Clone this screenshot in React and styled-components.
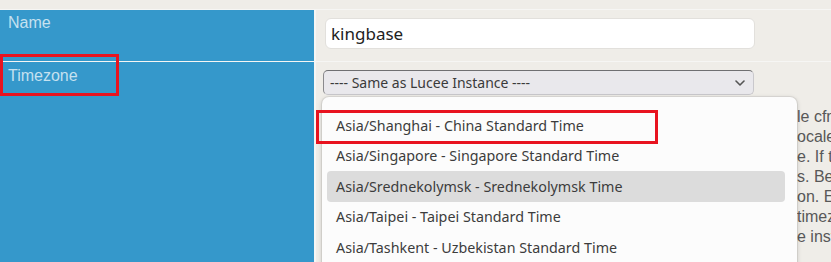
import React from 'react';
import styled, { createGlobalStyle } from 'styled-components';

const GlobalStyle = createGlobalStyle`
  html, body { margin: 0; padding: 0; overflow: hidden; }
  body {
    background: #efede8;
    font-family: "Liberation Sans", Arial, sans-serif;
    width: 831px; height: 262px;
  }
`;

const Page = styled.div`
  position: relative;
  width: 831px; height: 262px;
  overflow: hidden;
`;

// --- top strip (previous content, clipped) ---
const TopStrip = styled.div`
  height: 9px; overflow: hidden;
  padding-left: 146px;
`;

const Crumb = styled.span`
  display: block; margin-top: -16px;
  font-size: 14px; line-height: 16px; color: #3598cb;
`;

// --- form table ---
const Table = styled.div`
  display: grid;
  grid-template-columns: 314px 1fr;
  grid-template-rows: 51px 1fr;
  column-gap: 2px; row-gap: 1px;
  padding-top: 1px;
  background: #f6f6f4;
  height: 252px;
`;

const Label = styled.div`
  background: #3598cb;
  color: rgba(255, 255, 255, 0.72);
  font-size: 16px;
  padding: ${({ $top }) => $top}px 0 0 8px;
`;

const Value = styled.div`
  background: #efede8;
  padding: ${({ $pad }) => $pad};
`;

const TextInput = styled.div`
  width: 430px; height: 31px; box-sizing: border-box;
  background: #fff; border: 1px solid #e2e0dc; border-radius: 6px;
  display: flex; align-items: center; padding-left: 5px;
  font-family: "Noto Sans", sans-serif; font-size: 17px; color: #222;
`;

const SelectWrap = styled.div`
  position: relative; width: 431px;
`;

const Select = styled.div`
  height: 25px; box-sizing: border-box;
  background: #e9e8ec;
  border: 1px solid #c9c8cc; border-top-color: #6f6f72; border-left-color: #8a8a8d;
  border-radius: 5px;
  display: flex; align-items: center; justify-content: space-between;
  padding: 0 8px 0 6px;
  font-family: "Noto Sans", sans-serif; font-size: 14px; color: #3a3a3a;
  svg { color: #555; }
`;

const Popup = styled.div`
  position: absolute; top: 27px; left: -1px;
  width: 475px; height: 200px;
  background: #fcfcfc; border-radius: 7px;
  box-shadow: 0 0 0 1px rgba(0,0,0,0.06), 0 1px 5px rgba(0,0,0,0.18);
  padding: 13px 0 0 5px; box-sizing: border-box;
  z-index: 2;
`;

const Option = styled.div`
  width: 458px; height: 30.5px; box-sizing: border-box;
  display: flex; align-items: center; padding-left: 9px;
  border-radius: 4px;
  background: ${({ $hover }) => ($hover ? '#dcdcdc' : 'transparent')};
  font-family: "Noto Sans", sans-serif; font-size: 14.3px; color: #3c3c3c;
  white-space: nowrap;
`;

const Help = styled.div`
  margin-top: 12px;
  font-size: 16px; line-height: 20px; color: #585858;
`;

// only the line ends peek out from behind the open dropdown
const HelpLine = styled.div`
  white-space: nowrap;
  padding-left: 474px;
`;

// annotation boxes drawn over the screenshot
const Mark = styled.div`
  position: absolute;
  border: 3px solid #e8131f;
  box-sizing: border-box;
  left: ${({ $x }) => $x}px; top: ${({ $y }) => $y}px;
  width: ${({ $w }) => $w}px; height: ${({ $h }) => $h}px;
  z-index: 3;
`;

const zones = [
  'Asia/Shanghai - China Standard Time',
  'Asia/Singapore - Singapore Standard Time',
  'Asia/Srednekolymsk - Srednekolymsk Time',
  'Asia/Taipei - Taipei Standard Time',
  'Asia/Tashkent - Uzbekistan Standard Time',
];

const helpLines = ['le cfml', 'ocale', 'e. If the', 's. Be', 'on. Edit', 'timezone', 'e instance'];

const Chevron = () => (
  <svg width="10" height="6" viewBox="0 0 10 6" fill="none">
    <path d="M1 1l4 4 4-4" stroke="currentColor" strokeWidth="1.6" strokeLinecap="round" strokeLinejoin="round" />
  </svg>
);

export default function App() {
  return (
    <Page>
      <GlobalStyle />
      <TopStrip><Crumb>g</Crumb></TopStrip>
      <Table>
        <Label $top={4}>Name</Label>
        <Value $pad="8px 0 0 9px">
          <TextInput>kingbase</TextInput>
        </Value>
        <Label $top={5}>Timezone</Label>
        <Value $pad="8px 0 0 7px">
          <SelectWrap>
            <Select>
              <span>---- Same as Lucee Instance ----</span>
              <Chevron />
            </Select>
            <Popup>
              {zones.map((z, i) => (
                <Option key={z} $hover={i === 2}>{z}</Option>
              ))}
            </Popup>
          </SelectWrap>
          <Help>
            {helpLines.map((t) => (
              <HelpLine key={t}>{t}</HelpLine>
            ))}
          </Help>
        </Value>
      </Table>
      <Mark $x={0} $y={54} $w={119} $h={42} />
      <Mark $x={316} $y={110} $w={342} $h={34} />
    </Page>
  );
}
